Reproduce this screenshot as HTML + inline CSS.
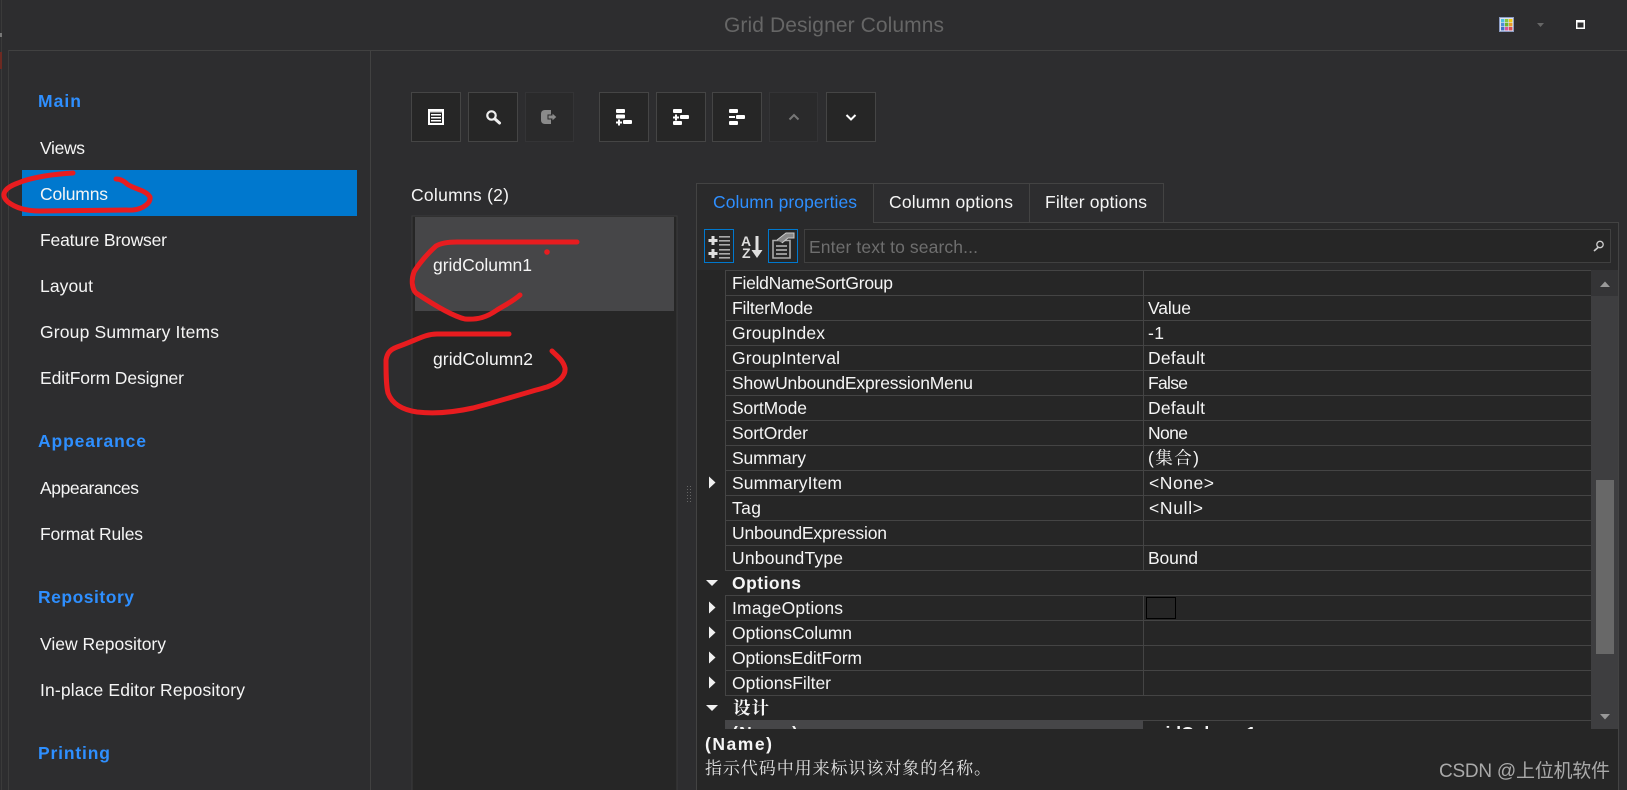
<!DOCTYPE html>
<html><head><meta charset="utf-8"><title>Grid Designer Columns</title>
<style>
html,body{margin:0;padding:0;background:#2d2d2f;width:1627px;height:790px;overflow:hidden}
svg{display:block}
text{font-family:"Liberation Sans","Noto Sans CJK SC",sans-serif;font-size:17.5px;fill:#f5f5f5}
.b{font-weight:bold}
.h{font-weight:bold;fill:#2e8fff;font-size:17.5px}
.s{fill:none;stroke:#e81c1f;stroke-width:5;stroke-linecap:round;stroke-linejoin:round}
</style></head><body>
<svg width="1627" height="790" viewBox="0 0 1627 790" xmlns="http://www.w3.org/2000/svg">
<defs><pattern id="dots" width="3" height="3" patternUnits="userSpaceOnUse"><rect width="1" height="1" fill="#666"/></pattern></defs>
<rect width="1627" height="790" fill="#2d2d2f"/>
<!-- frame -->
<rect x="1" y="0" width="1" height="790" fill="#3a3a3a"/>
<rect x="0" y="33" width="2" height="4" fill="#777"/>
<rect x="0" y="52" width="2" height="17" fill="#6d2a22"/>
<rect x="8" y="50" width="1619" height="1" fill="#414141"/>
<rect x="8" y="50" width="1" height="740" fill="#3c3c3c"/>
<rect x="370" y="50" width="1" height="740" fill="#414141"/>
<text x="724" y="32" textLength="220" style="font-size:21px;fill:#666">Grid Designer Columns</text>
<!-- palette -->
<rect x="1499.5" y="17.5" width="14" height="14" fill="#dfe3ee" stroke="#8c9cc4" stroke-width="1"/>
<rect x="1501" y="19" width="3.4" height="3.4" fill="#4ec0e0"/><rect x="1505" y="19" width="3.4" height="3.4" fill="#8cc63f"/><rect x="1509" y="19" width="3.4" height="3.4" fill="#f2c811"/>
<rect x="1501" y="23" width="3.4" height="3.4" fill="#4f8fd8"/><rect x="1505" y="23" width="3.4" height="3.4" fill="#6cb52d"/><rect x="1509" y="23" width="3.4" height="3.4" fill="#e89a2c"/>
<rect x="1501" y="27" width="3.4" height="3.4" fill="#3f6fc8"/><rect x="1505" y="27" width="3.4" height="3.4" fill="#d8569a"/><rect x="1509" y="27" width="3.4" height="3.4" fill="#d84f4f"/>
<polygon points="1537,23 1544,23 1540.5,27" fill="#666"/>
<rect x="1576.75" y="20.75" width="7.5" height="7.5" fill="none" stroke="#fff" stroke-width="1.5"/><rect x="1576" y="20" width="9" height="2.5" fill="#fff"/>
<!-- sidebar -->
<rect x="22" y="170" width="335" height="46" fill="#0078ce"/>
<text class="h" x="38" y="107" textLength="43">Main</text>
<text x="40" y="154" textLength="45">Views</text>
<text x="40" y="200" textLength="68">Columns</text>
<text x="40" y="246" textLength="127">Feature Browser</text>
<text x="40" y="292" textLength="53">Layout</text>
<text x="40" y="338" textLength="179">Group Summary Items</text>
<text x="40" y="384" textLength="144">EditForm Designer</text>
<text class="h" x="38" y="447" textLength="108">Appearance</text>
<text x="40" y="494" textLength="99">Appearances</text>
<text x="40" y="540" textLength="103">Format Rules</text>
<text class="h" x="38" y="603" textLength="96">Repository</text>
<text x="40" y="650" textLength="126">View Repository</text>
<text x="40" y="696" textLength="205">In-place Editor Repository</text>
<text class="h" x="38" y="759" textLength="72">Printing</text>
<!-- toolbar -->
<g fill="#262626" stroke="#454545" stroke-width="1">
<rect x="411.5" y="92.5" width="49" height="49"/><rect x="468.5" y="92.5" width="49" height="49"/>
<rect x="599.5" y="92.5" width="49" height="49"/><rect x="656.5" y="92.5" width="49" height="49"/><rect x="712.5" y="92.5" width="49" height="49"/><rect x="826.5" y="92.5" width="49" height="49"/>
</g>
<g fill="#2a2a2b" stroke="#343436" stroke-width="1"><rect x="525.5" y="92.5" width="48" height="49"/><rect x="769.5" y="92.5" width="48" height="49"/></g>
<rect x="428" y="109" width="16" height="16" fill="#fff"/>
<rect x="430" y="111" width="12" height="12" fill="#262626"/><rect x="431" y="114" width="10" height="1.5" fill="#fff"/><rect x="431" y="117" width="10" height="1.5" fill="#fff"/><rect x="431" y="120" width="10" height="1.5" fill="#fff"/><rect x="430" y="111" width="12" height="1.5" fill="#ddd"/>
<circle cx="491.5" cy="115.5" r="4.2" fill="none" stroke="#eee" stroke-width="2.2"/><path d="M495 119L499.5 123" stroke="#eee" stroke-width="3" stroke-linecap="round"/>
<path d="M545 110H551V124H545C542 124 541 122 541 120V114C541 112 542 110 545 110Z" fill="#8a8a8a"/><path d="M548 115H552V112.5L557 117L552 121.5V119H548Z" fill="#8a8a8a" stroke="#2a2a2b" stroke-width="1"/>
<g fill="#fff">
<rect x="616" y="109" width="9" height="4" rx="1"/><rect x="616" y="114.5" width="9" height="4" rx="1"/><rect x="623" y="120" width="9" height="4" rx="1"/><path d="M618 119.5h2v2h2v2h-2v2h-2v-2h-2v-2h2z"/>
<rect x="673" y="109" width="9" height="4" rx="1"/><rect x="680" y="115" width="9" height="4" rx="1"/><rect x="673" y="121" width="9" height="4" rx="1"/><path d="M675 114.5h2v2h2v2h-2v2h-2v-2h-2v-2h2z"/>
<rect x="729" y="109" width="9" height="4" rx="1"/><rect x="736" y="115" width="9" height="4" rx="1"/><rect x="729" y="121" width="9" height="4" rx="1"/><rect x="729" y="116" width="6" height="2"/>
</g>
<path d="M789.5 119.5L794 115L798.5 119.5" fill="none" stroke="#777" stroke-width="2"/>
<path d="M846.5 115L851 119.5L855.5 115" fill="none" stroke="#fff" stroke-width="2"/>
<!-- list -->
<text x="411" y="201" textLength="98">Columns (2)</text>
<rect x="412" y="216" width="265" height="580" fill="#262626" stroke="#3c3c3c" stroke-width="1"/>
<rect x="415" y="217" width="259" height="94" fill="#464648"/>
<text x="433" y="271" textLength="99">gridColumn1</text>
<text x="433" y="365" textLength="100">gridColumn2</text>
<!-- tabs/panel -->
<rect x="696" y="222" width="922" height="568" fill="#2a2a2b"/>
<rect x="696" y="183" width="178" height="40" fill="#2a2a2b"/>
<g fill="none" stroke="#434343" stroke-width="1">
<path d="M696.5 790V183.5H1163.5V222"/><path d="M873.5 184V222.5H1618.5V790"/><path d="M1029.5 184V222"/>
</g>
<text x="713" y="208" textLength="144" style="fill:#2e8fff">Column properties</text>
<text x="889" y="208" textLength="124">Column options</text>
<text x="1045" y="208" textLength="102">Filter options</text>
<!-- prop toolbar -->
<rect x="704.5" y="229.5" width="29" height="33" fill="#262626" stroke="#0078ce"/>
<g fill="#e0e0e0"><path d="M711.5 236h3v3h3v3h-3v3h-3v-3h-3v-3h3z"/><path d="M711.5 249h3v3h3v3h-3v3h-3v-3h-3v-3h3z"/></g>
<g fill="#aaa"><rect x="719" y="236" width="11" height="1.6"/><rect x="719" y="240" width="11" height="1.6"/><rect x="719" y="244" width="11" height="1.6"/><rect x="719" y="249" width="11" height="1.6"/><rect x="719" y="253" width="11" height="1.6"/><rect x="719" y="257" width="11" height="1.6"/></g>
<text class="b" x="741" y="246" style="font-size:14px;fill:#ddd" textLength="11">A</text>
<text class="b" x="742" y="258" style="font-size:14px;fill:#ddd" textLength="10">Z</text>
<path d="M757 236V252" stroke="#e0e0e0" stroke-width="3"/><polygon points="751.5,250 762.5,250 757,258" fill="#e0e0e0"/>
<rect x="768.5" y="229.5" width="29" height="33" fill="#262626" stroke="#0078ce"/>
<path d="M773 240.5H790V258H773Z" fill="none" stroke="#aaa" stroke-width="1.6"/>
<path d="M776 246h11M776 250h11M776 254h11" stroke="#bbb" stroke-width="1.6"/>
<path d="M777 240L786 233H794V238H788L782 243" fill="#888" stroke="#ccc" stroke-width="1"/>
<rect x="804.5" y="229.5" width="806" height="33" fill="#262626" stroke="#404040"/>
<text x="809" y="253" textLength="169" style="fill:#6e6e6e">Enter text to search...</text>
<circle cx="1600" cy="244.5" r="3.2" fill="none" stroke="#ccc" stroke-width="1.3"/><path d="M1598 247.5L1594 251" stroke="#ccc" stroke-width="1.6"/>
<!-- splitter -->
<rect x="685" y="485" width="6" height="18" fill="url(#dots)"/>
<!-- grid -->
<rect x="697" y="270" width="921" height="520" fill="#262626"/>
<rect x="725" y="720" width="418" height="9" fill="#464648"/>
<g fill="#444">
<rect x="725" y="270" width="866" height="1"/><rect x="725" y="295" width="866" height="1"/><rect x="725" y="320" width="866" height="1"/><rect x="725" y="345" width="866" height="1"/><rect x="725" y="370" width="866" height="1"/><rect x="725" y="395" width="866" height="1"/><rect x="725" y="420" width="866" height="1"/><rect x="725" y="445" width="866" height="1"/><rect x="725" y="470" width="866" height="1"/><rect x="725" y="495" width="866" height="1"/><rect x="725" y="520" width="866" height="1"/><rect x="725" y="545" width="866" height="1"/><rect x="725" y="570" width="866" height="1"/><rect x="725" y="595" width="866" height="1"/><rect x="725" y="620" width="866" height="1"/><rect x="725" y="645" width="866" height="1"/><rect x="725" y="670" width="866" height="1"/><rect x="725" y="695" width="866" height="1"/><rect x="1143" y="720" width="448" height="1"/>
<rect x="725" y="270" width="1" height="300"/><rect x="1143" y="270" width="1" height="300"/><rect x="725" y="595" width="1" height="100"/><rect x="1143" y="595" width="1" height="100"/>
</g>
<text x="732" y="289" textLength="161">FieldNameSortGroup</text>
<text x="732" y="314" textLength="81">FilterMode</text><text x="1148" y="314" textLength="43">Value</text>
<text x="732" y="339" textLength="93">GroupIndex</text><text x="1148" y="339" textLength="16">-1</text>
<text x="732" y="364" textLength="108">GroupInterval</text><text x="1148" y="364" textLength="57">Default</text>
<text x="732" y="389" textLength="241">ShowUnboundExpressionMenu</text><text x="1148" y="389" textLength="40">False</text>
<text x="732" y="414" textLength="75">SortMode</text><text x="1148" y="414" textLength="57">Default</text>
<text x="732" y="439" textLength="76">SortOrder</text><text x="1148" y="439" textLength="40">None</text>
<text x="732" y="464" textLength="74">Summary</text>
<text x="1148" y="464" textLength="51" style="font-family:'Liberation Sans','Noto Serif CJK SC',serif">(集合)</text>
<text x="732" y="489" textLength="110">SummaryItem</text><text x="1149" y="489" textLength="65">&lt;None&gt;</text>
<text x="732" y="514" textLength="29">Tag</text><text x="1149" y="514" textLength="54">&lt;Null&gt;</text>
<text x="732" y="539" textLength="155">UnboundExpression</text>
<text x="732" y="564" textLength="111">UnboundType</text><text x="1148" y="564" textLength="50">Bound</text>
<text class="b" x="732" y="589" textLength="69">Options</text>
<text x="732" y="614" textLength="111">ImageOptions</text>
<rect x="1146.5" y="597.5" width="29" height="21" fill="#262626" stroke="#000"/>
<text x="732" y="639" textLength="120">OptionsColumn</text>
<text x="732" y="664" textLength="130">OptionsEditForm</text>
<text x="732" y="689" textLength="99">OptionsFilter</text>
<text class="b" x="733" y="714" textLength="36" style="font-family:'Liberation Sans','Noto Serif CJK SC',serif">设计</text>
<svg x="697" y="720" width="894" height="9" viewBox="697 720 894 9">
<text class="b" x="732" y="739" textLength="66">(Name)</text>
<text class="b" x="1148" y="739" textLength="108">gridColumn1</text>
</svg>
<g fill="#f0f0f0">
<polygon points="706,580 718,580 712,586"/><polygon points="706,705 718,705 712,711"/>
<polygon points="709,476.5 715.5,482.5 709,488.5"/><polygon points="709,601.5 715.5,607.5 709,613.5"/><polygon points="709,626.5 715.5,632.5 709,638.5"/><polygon points="709,651.5 715.5,657.5 709,663.5"/><polygon points="709,676.5 715.5,682.5 709,688.5"/>
</g>
<!-- scrollbar -->
<rect x="1591" y="270" width="27" height="459" fill="#3e3e40"/>
<rect x="1591" y="270" width="27" height="26" fill="#343436"/>
<rect x="1596" y="480" width="18" height="174" fill="#686868"/>
<polygon points="1600,287 1610,287 1605,281.5" fill="#999"/>
<polygon points="1600,714 1610,714 1605,719.5" fill="#999"/>
<!-- description -->
<rect x="697" y="729" width="921" height="61" fill="#262626"/>
<rect x="1618" y="222" width="1" height="568" fill="#434343"/>
<text class="b" x="705" y="750" textLength="67">(Name)</text>
<text x="705" y="774" textLength="286" style="font-family:'Noto Serif CJK SC',serif;font-size:17px;fill:#e4e4e4">指示代码中用来标识该对象的名称。</text>
<text x="1439" y="777" textLength="171" style="font-size:19px;fill:#a9a9a9">CSDN @上位机软件</text>
<!-- hand-drawn marks -->
<path class="s" d="M73 173C55 174 32 177 18 183C4 188 0 195 8 202C17 209 28 211 40 211L133 210C143 209 151 203 150 197C146 190 134 189 127 184C123 180 119 179 116 179"/>
<path class="s" d="M577 242H457C447 242 441 243 436 246C427 254 418 265 414 272C411 280 412 289 416 293C434 305 452 316 465 319C478 320 487 317 497 310C505 305 512 302 520 295"/>
<circle cx="547" cy="252" r="2.8" fill="#e81c1f"/>
<path class="s" d="M509 334H437C425 334 417 340 397 347C389 350 387 354 386 360C386 372 386 385 388 393C392 404 403 410 417 412C435 414 455 412 473 408C500 401 525 393 547 387C558 383 566 376 565 368C563 360 557 356 552 351"/>
</svg>
</body></html>
